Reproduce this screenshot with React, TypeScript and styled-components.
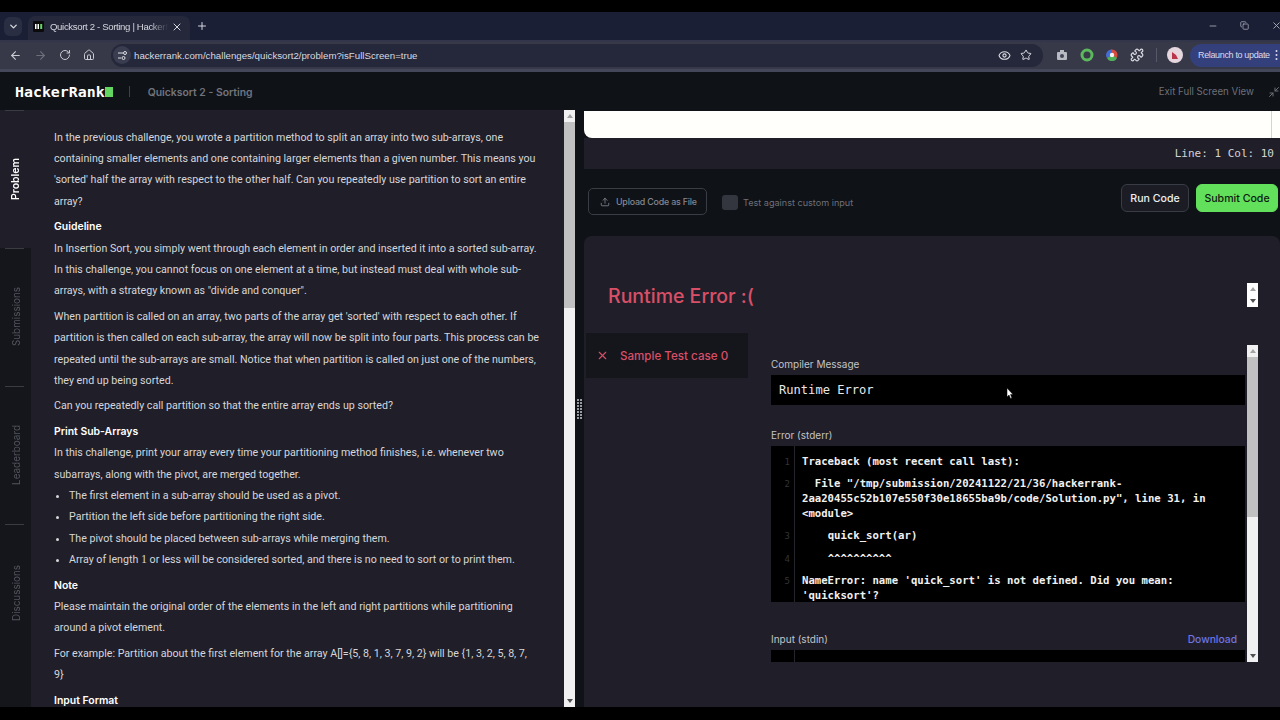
import React from "react";
import styled, { createGlobalStyle } from "styled-components";
import {
  ArrowLeft,
  ArrowRight,
  ChevronDown,
  Copy,
  Eye,
  Home,
  Minimize2,
  Minus,
  Plus,
  Puzzle,
  RotateCw,
  Star,
  Upload,
  X,
} from "lucide-react";

const GlobalStyle = createGlobalStyle`
  html, body {
    margin: 0;
    width: 1280px;
    height: 720px;
    overflow: hidden;
    background: #000;
  }
  * { box-sizing: border-box; }
`;

const Page = styled.div`
  display: flex;
  flex-direction: column;
  width: 1280px;
  height: 720px;
  padding: 12px 0 13px;
  background: #000;
  font-family: Inter, "Liberation Sans", sans-serif;
  overflow: hidden;
`;

/* browser chrome */
const TabStrip = styled.div`
  display: flex;
  align-items: flex-end;
  height: 28px;
  padding-left: 4px;
  background: #1a1f35;
  color: #d5d7de;
`;

const TabMenu = styled.div`
  display: grid;
  place-items: center;
  width: 18px;
  height: 19px;
  margin: 0 6px 4px 0;
  border-radius: 6px;
  background: #2a2e42;
`;

const Tab = styled.div`
  display: flex;
  align-items: center;
  width: 162px;
  height: 24px;
  padding: 0 7px 3px 5px;
  border-radius: 7px 7px 0 0;
  background: #25283a;
  font-family: "Liberation Sans", sans-serif;
  font-size: 9.6px;
  letter-spacing: -0.35px;
  white-space: nowrap;
`;

const TabTitle = styled.span`
  flex: 1;
  margin-left: 6px;
  overflow: hidden;
  mask-image: linear-gradient(to right, #000 100px, transparent 118px);
`;

const NewTab = styled.div`
  display: grid;
  place-items: center;
  margin: 0 0 8px 6px;
`;

const WindowButtons = styled.div`
  display: flex;
  gap: 22px;
  align-items: center;
  margin: 0 -2px 9px auto;
  color: #aeb0bb;
`;

const Toolbar = styled.div`
  display: flex;
  align-items: center;
  height: 32px;
  padding: 0 0 1px 9px;
  border-top: 2px solid #33364a;
  border-bottom: 3px solid #44465a;
  background: #373948;
  color: #c9cbd3;
`;

const NavIcons = styled.div`
  display: flex;
  gap: 12px;
  align-items: center;
`;

const Omnibox = styled.div`
  display: flex;
  align-items: center;
  flex: 0 0 932px;
  height: 23px;
  margin-left: 16px;
  padding: 0 11px 0 2px;
  border-radius: 12px;
  background: #25283a;
  font-family: "Liberation Sans", sans-serif;
  font-size: 9.7px;
  color: #d7d9e0;
`;

const SiteChip = styled.div`
  display: grid;
  place-items: center;
  width: 18px;
  height: 18px;
  margin-right: 3px;
  border-radius: 50%;
  background: #3a3d50;
`;

const OmniIcons = styled.div`
  display: flex;
  gap: 9px;
  align-items: center;
  margin-left: auto;
  color: #dcdde3;
`;

const Extensions = styled.div`
  display: flex;
  gap: 12px;
  align-items: center;
  margin-left: 13px;
`;

const Separator = styled.div`
  width: 1px;
  height: 14px;
  margin-right: -2px;
  background: #55586a;
`;

const Relaunch = styled.div`
  display: flex;
  align-items: center;
  justify-content: space-between;
  flex: 1;
  height: 23px;
  margin-left: 7px;
  padding: 0 2px 0 8px;
  border-radius: 12px 0 0 12px;
  background: #34407c;
  font-family: "Liberation Sans", sans-serif;
  font-size: 9px;
  letter-spacing: -0.35px;
  white-space: nowrap;
  color: #d8dcf0;
`;

/* hackerrank header */
const Header = styled.div`
  display: flex;
  align-items: center;
  height: 38px;
  padding: 1px 0 0 15px;
  background: #0f1217;
`;

const Logo = styled.div`
  display: flex;
  align-items: center;
  font-family: "DejaVu Sans Mono", monospace;
  font-size: 14.9px;
  font-weight: 700;
  color: #fff;
`;

const LogoBlock = styled.span`
  width: 8px;
  height: 10px;
  background: #62d660;
`;

const HeaderRule = styled.div`
  width: 1px;
  height: 11px;
  margin: 0 18px 0 16px;
  background: #3f424c;
`;

const HeaderTitle = styled.div`
  padding-top: 1px;
  font-size: 10.4px;
  font-weight: 600;
  color: #71747e;
`;

const ExitFull = styled.div`
  display: flex;
  align-items: center;
  gap: 14px;
  margin-left: auto;
  font-size: 9.7px;
  color: #6d7079;
`;

/* main area */
const Main = styled.div`
  display: flex;
  flex: 1;
  min-height: 0;
  background: #0f1217;
`;

const Rail = styled.div`
  display: flex;
  flex-direction: column;
  flex: 0 0 31px;
  background: #14161b;
`;

const RailItem = styled.div<{ $active?: boolean }>`
  position: relative;
  display: grid;
  place-items: center;
  height: 138px;
  background: ${(p) => (p.$active ? "#201f29" : "transparent")};
  &::before {
    content: "";
    position: absolute;
    top: 0;
    left: 5px;
    width: 19px;
    height: 1px;
    background: #3a3c44;
  }
`;

const RailLabel = styled.span<{ $active?: boolean }>`
  writing-mode: vertical-rl;
  transform: rotate(180deg);
  font-size: ${(p) => (p.$active ? "10.5px" : "9.9px")};
  font-weight: ${(p) => (p.$active ? 600 : 400)};
  color: ${(p) => (p.$active ? "#fff" : "#54565f")};
`;

const Statement = styled.div`
  flex: 0 0 533px;
  height: 100%;
  padding: 16.5px 23px 0 23px;
  background: #201f29;
  overflow: hidden;
  font-family: Roboto, Inter, sans-serif;
  font-size: 10.66px;
  line-height: 21.4px;
  color: #d6d6da;
`;

const Para = styled.p`
  margin: 0 0 4px;
`;

const Heading = styled.div`
  font-family: Inter, sans-serif;
  font-size: 10.45px;
  font-weight: 600;
  color: #fff;
`;

const Bullets = styled.ul`
  margin: -4px 0 4px;
  padding-left: 15px;
`;

const MathDigit = styled.span`
  font-family: "Liberation Serif", serif;
  font-size: 12px;
`;

const Scrollbar = styled.div`
  display: flex;
  flex-direction: column;
  align-items: center;
  background: #f1f1f1;
`;

const PageScroll = styled(Scrollbar)`
  flex: 0 0 11px;
  height: 100%;
`;

const Arrow = styled.div<{ $down?: boolean }>`
  flex: 0 0 auto;
  width: 0;
  height: 0;
  margin: 4px 0;
  border-left: 3px solid transparent;
  border-right: 3px solid transparent;
  ${(p) =>
    p.$down
      ? "border-top: 4px solid #505050;"
      : "border-bottom: 4px solid #a3a3a3;"}
`;

const Thumb = styled.div<{ $height: number }>`
  flex: 0 0 ${(p) => p.$height}px;
  width: 100%;
  background: #c1c1c1;
`;

const Spring = styled.div`
  flex: 1;
`;

const Splitter = styled.div`
  flex: 0 0 9px;
  display: grid;
  place-items: center;
`;

const Grip = styled.div`
  display: grid;
  grid-template-columns: repeat(2, 2px);
  gap: 1px;
`;

const Dot = styled.span`
  width: 2px;
  height: 2px;
  background: #9a9ca3;
`;

const Workspace = styled.div`
  display: flex;
  flex-direction: column;
  flex: 1;
  min-width: 0;
`;

const EditorEnd = styled.div`
  flex: 0 0 27px;
  margin-top: 1px;
  border-radius: 0 0 0 8px;
  background: linear-gradient(
    to right,
    #fffffb 687px,
    #d4d4d4 687px,
    #d4d4d4 688px,
    #fffffb 688px
  );
`;

const StatusLine = styled.div`
  display: flex;
  justify-content: flex-end;
  align-items: center;
  flex: 0 0 31px;
  padding-right: 6px;
  background: #201f29;
  font-family: "DejaVu Sans Mono", monospace;
  font-size: 11px;
  color: #d3d3d6;
`;

const Actions = styled.div`
  display: flex;
  align-items: flex-start;
  flex: 0 0 67px;
  padding: 15px 2px 0 4px;
`;

const UploadButton = styled.div`
  display: flex;
  align-items: center;
  gap: 6px;
  width: 119px;
  height: 27px;
  margin-top: 4px;
  padding-left: 11px;
  border: 1px solid #3b3d45;
  border-radius: 5px;
  font-size: 8.9px;
  font-weight: 500;
  letter-spacing: -0.2px;
  color: #858790;
`;

const CustomInput = styled.div`
  display: flex;
  align-items: center;
  gap: 5px;
  margin: 11px 0 0 15px;
  font-size: 9.1px;
  color: #6e7079;
`;

const CheckBox = styled.div`
  width: 16px;
  height: 15px;
  border-radius: 3px;
  background: #34363f;
`;

const ActionButton = styled.div<{ $primary?: boolean }>`
  display: grid;
  place-items: center;
  width: ${(p) => (p.$primary ? "82px" : "68px")};
  height: 28px;
  margin-left: ${(p) => (p.$primary ? "7px" : "auto")};
  border: 1px solid ${(p) => (p.$primary ? "#62e05b" : "#3a3c45")};
  border-radius: 6px;
  background: ${(p) => (p.$primary ? "#62e05b" : "#1c1d24")};
  font-size: 10.6px;
  font-weight: 500;
  color: ${(p) => (p.$primary ? "#0e1a10" : "#eeeef0")};
`;

const Results = styled.div`
  display: flex;
  flex-direction: column;
  flex: 1;
  min-height: 0;
  padding-top: 47px;
  border-radius: 8px 8px 0 0;
  background: #201f29;
`;

const ResultHead = styled.div`
  display: flex;
  align-items: center;
  justify-content: space-between;
  height: 24px;
  padding: 0 22px 0 24px;
`;

const ResultTitle = styled.h2`
  margin: 0;
  padding-top: 1px;
  font-size: 19.5px;
  font-weight: 500;
  color: #d94f68;
`;

const MiniScroll = styled(Scrollbar)`
  justify-content: space-between;
  width: 11px;
  height: 24px;
  background: #fff;
`;

const ResultBody = styled.div`
  display: flex;
  height: 329px;
  margin-top: 26px;
  padding: 12px 22px 0 2px;
`;

const CaseColumn = styled.div`
  flex: 0 0 162px;
  margin-top: -12px;
`;

const CaseTab = styled.div`
  display: flex;
  align-items: center;
  gap: 11px;
  height: 45px;
  padding-left: 10px;
  background: #15161c;
  font-size: 11.6px;
  font-weight: 500;
  color: #d94f68;
`;

const Output = styled.div`
  flex: 0 0 474px;
  height: 317px;
  margin-left: 23px;
  overflow: hidden;
`;

const LabelRow = styled.div<{ $gap: number }>`
  display: flex;
  justify-content: space-between;
  align-items: center;
  height: 12px;
  margin: ${(p) => p.$gap}px 8px 5px 0;
  font-size: 10px;
  color: #c3c3c8;
`;

const DownloadLink = styled.span`
  font-size: 10.3px;
  font-weight: 500;
  color: #6f74e0;
`;

const MessageBox = styled.div`
  height: 30px;
  padding: 0 8px;
  background: #000;
  font-family: "DejaVu Sans Mono", monospace;
  font-size: 12.1px;
  line-height: 30px;
  color: #e8e8e8;
`;

const CodeBox = styled.div<{ $height: number }>`
  height: ${(p) => p.$height}px;
  padding-top: 9px;
  background: linear-gradient(
    to right,
    #000 23px,
    #25262c 23px,
    #25262c 24px,
    #000 24px
  );
  overflow: hidden;
`;

const CodeRow = styled.div`
  display: flex;
  margin-bottom: 7.7px;
`;

const LineNo = styled.span`
  flex: 0 0 31px;
  padding-right: 12px;
  text-align: right;
  font-family: "DejaVu Sans Mono", monospace;
  font-size: 9px;
  line-height: 14.7px;
  color: #33343a;
`;

const CodeText = styled.pre`
  flex: 1;
  margin: 0;
  white-space: pre-wrap;
  overflow-wrap: anywhere;
  font-family: "DejaVu Sans Mono", monospace;
  font-size: 10.65px;
  font-weight: 700;
  line-height: 14.7px;
  color: #f1f1f1;
`;

const OutputScroll = styled(Scrollbar)`
  flex: 0 0 11px;
  height: 317px;
  margin-left: 2px;
`;

const Cursor = styled.svg`
  position: absolute;
  left: 1006px;
  top: 388px;
`;

const statementLines = [
  "The first element in a sub-array should be used as a pivot.",
  "Partition the left side before partitioning the right side.",
  "The pivot should be placed between sub-arrays while merging them.",
];

const errorLines = [
  "Traceback (most recent call last):",
  '  File "/tmp/submission/20241122/21/36/hackerrank-2aa20455c52b107e550f30e18655ba9b/code/Solution.py", line 31, in <module>',
  "    quick_sort(ar)",
  "    ^^^^^^^^^^",
  "NameError: name 'quick_sort' is not defined. Did you mean: 'quicksort'?",
];

const App: React.FC = () => {
  return (
    <Page>
      <GlobalStyle />
      <TabStrip>
        <TabMenu>
          <ChevronDown size={11} strokeWidth={3} />
        </TabMenu>
        <Tab>
          <svg width="11" height="11" viewBox="0 0 11 11">
            <rect width="11" height="11" rx="1" fill="#0b0b0b" />
            <rect x="2" y="3" width="1.5" height="5" fill="#fff" />
            <rect x="4.5" y="3" width="1.5" height="5" fill="#fff" />
            <rect x="7.2" y="3" width="2" height="5" fill="#62d660" />
          </svg>
          <TabTitle>Quicksort 2 - Sorting | HackerR</TabTitle>
          <X size={12} />
        </Tab>
        <NewTab>
          <Plus size={12} />
        </NewTab>
        <WindowButtons>
          <Minus size={10} />
          <Copy size={9} />
          <X size={11} />
        </WindowButtons>
      </TabStrip>

      <Toolbar>
        <NavIcons>
          <ArrowLeft size={13} />
          <ArrowRight size={13} color="#6d6f7c" />
          <RotateCw size={12} />
          <Home size={12} />
        </NavIcons>
        <Omnibox>
          <SiteChip>
            <svg width="11" height="11" viewBox="0 0 11 11" fill="none" stroke="#e0e1e6">
              <path d="M1 3h5M1 8h3" />
              <circle cx="8" cy="3" r="1.5" />
              <circle cx="6.5" cy="8" r="1.5" />
            </svg>
          </SiteChip>
          hackerrank.com/challenges/quicksort2/problem?isFullScreen=true
          <OmniIcons>
            <Eye size={13} />
            <Star size={12} />
          </OmniIcons>
        </Omnibox>
        <Extensions>
          <svg width="12" height="12" viewBox="0 0 12 12">
            <rect x="1" y="3" width="10" height="8" rx="1" fill="#b9bbc2" />
            <rect x="4" y="1" width="4" height="3" fill="#b9bbc2" />
            <circle cx="6" cy="7" r="2" fill="#44465a" />
          </svg>
          <svg width="14" height="14" viewBox="0 0 14 14">
            <circle cx="7" cy="7" r="5" fill="none" stroke="#5cb85c" strokeWidth="3" />
          </svg>
          <svg width="12" height="12" viewBox="0 0 12 12">
            <circle cx="6" cy="6" r="5.5" fill="#d64b3f" />
            <path d="M6 6 1 9a5.5 5.5 0 0 0 10 0z" fill="#4eaf5a" />
            <path d="M6 6 6 .5A5.5 5.5 0 0 0 1 9z" fill="#3f6ed8" />
            <circle cx="6" cy="6" r="2.2" fill="#f3f3f3" />
          </svg>
          <Puzzle size={14} color="#dcdde3" />
          <Separator />
          <svg width="16" height="16" viewBox="0 0 16 16">
            <circle cx="8" cy="8" r="8" fill="#e6d7de" />
            <path d="M5 5l4 3 2 4H5z" fill="#b8354a" />
          </svg>
        </Extensions>
        <Relaunch>
          Relaunch to update
          <svg width="3" height="12" viewBox="0 0 3 12" fill="#d8dcf0">
            <circle cx="1.5" cy="2" r="1" />
            <circle cx="1.5" cy="6" r="1" />
            <circle cx="1.5" cy="10" r="1" />
          </svg>
        </Relaunch>
      </Toolbar>

      <Header>
        <Logo>
          HackerRank
          <LogoBlock />
        </Logo>
        <HeaderRule />
        <HeaderTitle>Quicksort 2 - Sorting</HeaderTitle>
        <ExitFull>
          Exit Full Screen View
          <Minimize2 size={12} />
        </ExitFull>
      </Header>

      <Main>
        <Rail>
          <RailItem $active>
            <RailLabel $active>Problem</RailLabel>
          </RailItem>
          <RailItem>
            <RailLabel>Submissions</RailLabel>
          </RailItem>
          <RailItem>
            <RailLabel>Leaderboard</RailLabel>
          </RailItem>
          <RailItem>
            <RailLabel>Discussions</RailLabel>
          </RailItem>
        </Rail>

        <Statement>
          <Para>
            In the previous challenge, you wrote a partition method to split an array into two sub-arrays, one
            containing smaller elements and one containing larger elements than a given number. This means you
            'sorted' half the array with respect to the other half. Can you repeatedly use partition to sort an entire
            array?
          </Para>
          <Heading>Guideline</Heading>
          <Para>
            In Insertion Sort, you simply went through each element in order and inserted it into a sorted sub-array.
            In this challenge, you cannot focus on one element at a time, but instead must deal with whole
            sub-arrays, with a strategy known as "divide and conquer".
          </Para>
          <Para>
            When partition is called on an array, two parts of the array get 'sorted' with respect to each other. If
            partition is then called on each sub-array, the array will now be split into four parts. This process can be
            repeated until the sub-arrays are small. Notice that when partition is called on just one of the numbers,
            they end up being sorted.
          </Para>
          <Para>Can you repeatedly call partition so that the entire array ends up sorted?</Para>
          <Heading>Print Sub-Arrays</Heading>
          <Para>
            In this challenge, print your array every time your partitioning method finishes, i.e. whenever two
            subarrays, along with the pivot, are merged together.
          </Para>
          <Bullets>
            {statementLines.map((line) => (
              <li key={line}>{line}</li>
            ))}
            <li>
              Array of length <MathDigit>1</MathDigit> or less will be considered sorted, and there is no need to sort or
              to print them.
            </li>
          </Bullets>
          <Heading>Note</Heading>
          <Para>
            Please maintain the original order of the elements in the left and right partitions while partitioning
            around a pivot element.
          </Para>
          <Para>
            For example: Partition about the first element for the array A[]={"{"}5, 8, 1, 3, 7, 9, 2{"}"} will be {"{"}1, 3, 2, 5, 8, 7,
            <br />
            9{"}"}
          </Para>
          <Heading>Input Format</Heading>
        </Statement>

        <PageScroll>
          <Arrow />
          <Thumb $height={186} />
          <Spring />
          <Arrow $down />
        </PageScroll>

        <Splitter>
          <Grip>
            {Array.from({ length: 14 }, (_, i) => (
              <Dot key={i} />
            ))}
          </Grip>
        </Splitter>

        <Workspace>
          <EditorEnd />
          <StatusLine>Line: 1 Col: 10</StatusLine>
          <Actions>
            <UploadButton>
              <Upload size={10} />
              Upload Code as File
            </UploadButton>
            <CustomInput>
              <CheckBox />
              Test against custom input
            </CustomInput>
            <ActionButton>Run Code</ActionButton>
            <ActionButton $primary>Submit Code</ActionButton>
          </Actions>
          <Results>
            <ResultHead>
              <ResultTitle>Runtime Error :(</ResultTitle>
              <MiniScroll>
                <Arrow />
                <Arrow $down />
              </MiniScroll>
            </ResultHead>
            <ResultBody>
              <CaseColumn>
                <CaseTab>
                  <X size={13} />
                  Sample Test case 0
                </CaseTab>
              </CaseColumn>
              <Output>
                <LabelRow $gap={13}>Compiler Message</LabelRow>
                <MessageBox>Runtime Error</MessageBox>
                <LabelRow $gap={24}>Error (stderr)</LabelRow>
                <CodeBox $height={156}>
                  {errorLines.map((line, i) => (
                    <CodeRow key={line}>
                      <LineNo>{i + 1}</LineNo>
                      <CodeText>{line}</CodeText>
                    </CodeRow>
                  ))}
                </CodeBox>
                <LabelRow $gap={31}>
                  Input (stdin)
                  <DownloadLink>Download</DownloadLink>
                </LabelRow>
                <CodeBox $height={12} />
              </Output>
              <OutputScroll>
                <Arrow />
                <Thumb $height={160} />
                <Spring />
                <Arrow $down />
              </OutputScroll>
            </ResultBody>
          </Results>
        </Workspace>
      </Main>

      <Cursor width="7" height="11" viewBox="0 0 7 11">
        <path d="M1 0v9l2-2 1.5 3.5 1.4-.6L4.5 6.5H7z" fill="#fff" stroke="#000" strokeWidth="0.5" />
      </Cursor>
    </Page>
  );
};

export default App;
